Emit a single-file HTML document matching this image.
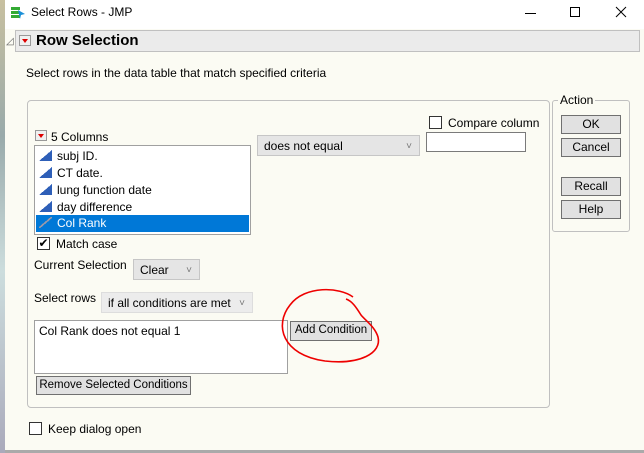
<!DOCTYPE html>
<html><head><style>
*{margin:0;padding:0;box-sizing:border-box}
body{width:644px;height:453px;overflow:hidden;background:#fff;font-family:"Liberation Sans",sans-serif;font-size:12px;color:#000;position:relative}
.a{position:absolute;white-space:nowrap}
.btn{position:absolute;background:#e1e1e1;border:1px solid #707070;text-align:center;font-size:12px;line-height:17px;white-space:nowrap;overflow:hidden}
.dd{position:absolute;background:#e5e5e5;border:1px solid #c6c6c6;font-size:12px;padding-left:6px;white-space:nowrap}
.dd:after{content:"˅";position:absolute;right:7px;top:0;color:#777;font-size:10px}
.cb{position:absolute;width:13px;height:13px;border:1px solid #333;background:#fff}
.rb{position:absolute;width:12px;height:11px;border:1px solid #999;background:#f0f0f0}
.rb:after{content:"";position:absolute;left:2px;top:3px;border-left:3px solid transparent;border-right:3px solid transparent;border-top:4px solid #d00}
.tri{display:inline-block;width:13px;height:11px;vertical-align:-1px;margin-right:5px;background:linear-gradient(to top left,#2e5fb8 50%,transparent 50%)}
</style></head><body>
<div class="a" style="left:0;top:0;width:5px;height:453px;background:linear-gradient(#c8c0a0,#9aa 30%,#cdd 60%,#aab)"></div>
<div class="a" style="left:5px;top:0;width:639px;height:29px;background:#fff"></div>
<svg class="a" style="left:10px;top:5px" width="16" height="16"><rect x="1" y="2" width="9" height="3" fill="#3a3"/><rect x="1" y="6" width="9" height="3" fill="#3a3"/><rect x="1" y="10" width="9" height="3" fill="#3a3"/><path d="M8 5 L15 9 L11 10 L10 14 Z" fill="#1a8fd8"/></svg>
<div class="a" style="left:31px;top:5px;font-size:12px">Select Rows - JMP</div>
<div class="a" style="left:525px;top:13px;width:11px;height:1px;background:#000"></div>
<div class="a" style="left:570px;top:7px;width:10px;height:10px;border:1px solid #000"></div>
<svg class="a" style="left:615px;top:6px" width="12" height="12"><path d="M1 1L11 11M11 1L1 11" stroke="#000" stroke-width="1"/></svg>
<div class="a" style="left:5px;top:29px;width:639px;height:421px;background:#fbfbf3"></div>
<div class="a" style="left:5px;top:450px;width:639px;height:3px;background:#aaa"></div>
<div class="a" style="left:6px;top:36px;color:#666;font-size:10px">◿</div>
<div class="a" style="left:15px;top:30px;width:625px;height:22px;background:#ebebeb;border:1px solid #c0c0c0"></div>
<div class="rb" style="left:19px;top:35px"></div>
<div class="a" style="left:36px;top:32px;font-size:15px;font-weight:bold">Row Selection</div>
<div class="a" style="left:26px;top:66px">Select rows in the data table that match specified criteria</div>
<div class="a" style="left:27px;top:100px;width:523px;height:308px;border:1px solid #c0c0c0;border-radius:4px"></div>
<div class="rb" style="left:35px;top:130px"></div>
<div class="a" style="left:51px;top:130px">5 Columns</div>
<div class="a" style="left:34px;top:145px;width:217px;height:90px;background:#fff;border:1px solid #a0a0a0"></div>
<div class="a" style="left:39px;top:148px;line-height:17px">
<div><span class="tri"></span>subj ID.</div>
<div><span class="tri"></span>CT date.</div>
<div><span class="tri"></span>lung function date</div>
<div><span class="tri"></span>day difference</div></div>
<div class="a" style="left:36px;top:215px;width:213px;height:17px;background:#0078d7;color:#fff;padding-left:3px;line-height:17px"><span class="tri" style="background:linear-gradient(to top left,transparent 45%,#99a 45%,#99a 55%,transparent 55%)"></span>Col Rank</div>
<div class="cb" style="left:37px;top:237px;font-size:12px;line-height:11px;text-align:center">✔</div>
<div class="a" style="left:56px;top:237px">Match case</div>
<div class="a" style="left:34px;top:258px">Current Selection</div>
<div class="dd" style="left:133px;top:259px;width:67px;height:21px;line-height:21px">Clear</div>
<div class="a" style="left:34px;top:291px">Select rows</div>
<div class="dd" style="left:101px;top:292px;width:152px;height:21px;line-height:21px;background:#ececec;border-color:#ddd">if all conditions are met</div>
<div class="a" style="left:34px;top:320px;width:254px;height:54px;background:#fff;border:1px solid #a0a0a0;padding:3px 0 0 4px">Col Rank does not equal 1</div>
<div class="btn" style="left:290px;top:321px;width:82px;height:20px;font-size:11.5px">Add Condition</div>
<div class="btn" style="left:36px;top:376px;width:155px;height:19px;font-size:11.5px">Remove Selected Conditions</div>
<div class="dd" style="left:257px;top:135px;width:163px;height:21px;line-height:21px">does not equal</div>
<div class="cb" style="left:429px;top:116px;border-color:#333"></div>
<div class="a" style="left:448px;top:116px">Compare column</div>
<div class="a" style="left:426px;top:132px;width:100px;height:20px;background:#fff;border:1px solid #7a7a7a"></div>
<div class="a" style="left:552px;top:100px;width:78px;height:132px;border:1px solid #c0c0c0;border-radius:3px"></div>
<div class="a" style="left:558px;top:93px;background:#fbfbf3;padding:0 2px">Action</div>
<div class="btn" style="left:561px;top:115px;width:60px;height:19px">OK</div>
<div class="btn" style="left:561px;top:138px;width:60px;height:19px">Cancel</div>
<div class="btn" style="left:561px;top:177px;width:60px;height:19px">Recall</div>
<div class="btn" style="left:561px;top:200px;width:60px;height:19px">Help</div>
<div class="cb" style="left:29px;top:422px"></div>
<div class="a" style="left:48px;top:422px">Keep dialog open</div>
<svg class="a" style="left:270px;top:285px" width="120" height="85"><path d="M83 12 C70 2 35 0 20 20 C4 40 12 70 55 76 C90 80 112 68 108 52 C105 42 96 36 91 30 C86 22 82 16 76 14" fill="none" stroke="#e00" stroke-width="1.6"/></svg>
</body></html>
